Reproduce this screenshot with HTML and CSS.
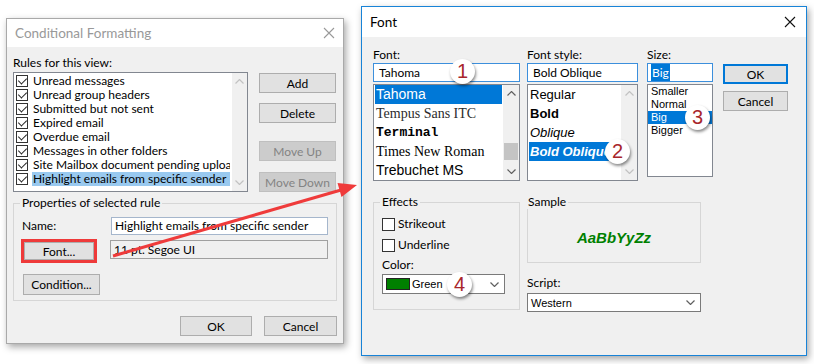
FILE: index.html
```html
<!DOCTYPE html>
<html lang="en">
  <head>
    <meta charset="UTF-8" />
    <meta name="viewport" content="width=device-width, initial-scale=1.0" />
    <title>Conditional Formatting - Font</title>
    <link rel="stylesheet" href="styles.css">
  </head>
  <body>
    <div class="screen">
      <!-- Conditional Formatting dialog -->
      <section class="dlg dlg-rules">
        <header class="titlebar inactive">
          <span class="title">Conditional Formatting</span>
          <svg class="close" width="12" height="12" viewBox="0 0 12 12"><path d="M1 1L11 11M11 1L1 11" /></svg>
        </header>
        <div class="dlg-body">
          <div class="lbl">Rules for this view:</div>
          <div class="rules-top">
            <div class="listbox rules-list">
              <ul class="items">
                <li><span class="chk"></span><span class="txt">Unread messages</span></li>
                <li><span class="chk"></span><span class="txt">Unread group headers</span></li>
                <li><span class="chk"></span><span class="txt">Submitted but not sent</span></li>
                <li><span class="chk"></span><span class="txt">Expired email</span></li>
                <li><span class="chk"></span><span class="txt">Overdue email</span></li>
                <li><span class="chk"></span><span class="txt">Messages in other folders</span></li>
                <li><span class="chk"></span><span class="txt">Site Mailbox document pending upload</span></li>
                <li><span class="chk"></span><span class="txt current">Highlight emails from specific sender</span></li>
              </ul>
              <div class="vscroll off narrow">
                <span class="sb-btn"><svg width="9" height="5" viewBox="0 0 9 5"><path d="M0.5 4.5L4.5 0.5L8.5 4.5" /></svg></span>
                <span class="sb-track"></span>
                <span class="sb-btn"><svg width="9" height="5" viewBox="0 0 9 5"><path d="M0.5 0.5L4.5 4.5L8.5 0.5" /></svg></span>
              </div>
            </div>
            <div class="side-btns">
              <button class="btn">Add</button>
              <button class="btn">Delete</button>
              <button class="btn up" disabled>Move Up</button>
              <button class="btn down" disabled>Move Down</button>
            </div>
          </div>
          <fieldset class="group props">
            <legend>Properties of selected rule</legend>
            <div class="prop-grid">
              <span class="lbl">Name:</span>
              <div class="field name-field">Highlight emails from specific sender</div>
              <button class="btn font-btn">Font...</button>
              <div class="field info-field">11 pt. Segoe UI</div>
              <button class="btn cond-btn">Condition...</button>
            </div>
          </fieldset>
          <div class="footer">
            <button class="btn ok">OK</button>
            <button class="btn cancel">Cancel</button>
          </div>
        </div>
      </section>

      <!-- Font dialog -->
      <section class="dlg dlg-font">
        <header class="titlebar">
          <span class="title">Font</span>
          <svg class="close" width="12" height="12" viewBox="0 0 12 12"><path d="M1 1L11 11M11 1L1 11" /></svg>
        </header>
        <div class="dlg-body">
          <div class="font-top">
            <div class="fcol fcol-font">
              <div class="lbl">Font:</div>
              <div class="field blue">Tahoma</div>
              <div class="listbox tall">
                <ul class="items font-items">
                  <li class="f-tahoma sel">Tahoma</li>
                  <li class="f-tempus">Tempus Sans ITC</li>
                  <li class="f-terminal">Terminal</li>
                  <li class="f-times">Times New Roman</li>
                  <li class="f-trebuchet">Trebuchet MS</li>
                </ul>
                <div class="vscroll">
                  <span class="sb-btn"><svg width="9" height="5" viewBox="0 0 9 5"><path d="M0.5 4.5L4.5 0.5L8.5 4.5" /></svg></span>
                  <span class="sb-track"><span class="sb-thumb"></span></span>
                  <span class="sb-btn"><svg width="9" height="5" viewBox="0 0 9 5"><path d="M0.5 0.5L4.5 4.5L8.5 0.5" /></svg></span>
                </div>
              </div>
            </div>
            <div class="fcol fcol-style">
              <div class="lbl">Font style:</div>
              <div class="field blue">Bold Oblique</div>
              <div class="listbox tall">
                <ul class="items style-items">
                  <li>Regular</li>
                  <li class="s-bold">Bold</li>
                  <li class="s-italic">Oblique</li>
                  <li class="s-bold s-italic sel">Bold Oblique</li>
                </ul>
                <div class="vscroll off">
                  <span class="sb-btn"><svg width="9" height="5" viewBox="0 0 9 5"><path d="M0.5 4.5L4.5 0.5L8.5 4.5" /></svg></span>
                  <span class="sb-track"></span>
                  <span class="sb-btn"><svg width="9" height="5" viewBox="0 0 9 5"><path d="M0.5 0.5L4.5 4.5L8.5 0.5" /></svg></span>
                </div>
              </div>
            </div>
            <div class="fcol fcol-size">
              <div class="lbl">Size:</div>
              <div class="field blue"><span class="picked">Big</span></div>
              <div class="listbox size-list">
                <ul class="items size-items">
                  <li>Smaller</li>
                  <li>Normal</li>
                  <li class="sel">Big</li>
                  <li>Bigger</li>
                </ul>
              </div>
            </div>
            <div class="fcol fcol-btns">
              <button class="btn default">OK</button>
              <button class="btn">Cancel</button>
            </div>
          </div>

          <div class="font-bottom">
            <fieldset class="group effects">
              <legend>Effects</legend>
              <div class="check-row"><span class="box"></span>Strikeout</div>
              <div class="check-row second"><span class="box"></span>Underline</div>
              <div class="lbl color-lbl">Color:</div>
              <div class="select color-select">
                <span class="swatch"></span>
                <span class="sel-text">Green</span>
                <svg class="caret" width="9" height="5" viewBox="0 0 9 5"><path d="M0.5 0.5L4.5 4.5L8.5 0.5" /></svg>
              </div>
            </fieldset>
            <div class="sample-col">
              <fieldset class="group sample">
                <legend>Sample</legend>
                <div class="sample-box"><span class="sample-text">AaBbYyZz</span></div>
              </fieldset>
              <div class="lbl script-lbl">Script:</div>
              <div class="select script-select">
                <span class="sel-text">Western</span>
                <svg class="caret" width="9" height="5" viewBox="0 0 9 5"><path d="M0.5 0.5L4.5 4.5L8.5 0.5" /></svg>
              </div>
            </div>
          </div>
        </div>
      </section>

      <!-- callouts -->
      <svg class="arrow" width="814" height="364" viewBox="0 0 814 364">
        <line x1="113" y1="256" x2="341" y2="190" />
        <polygon points="357,185 337.5,183 341.5,197" />
      </svg>
      <span class="badge b1">1</span>
      <span class="badge b2">2</span>
      <span class="badge b3">3</span>
      <span class="badge b4">4</span>
    </div>
  </body>
</html>
```

FILE: styles.css
```css
* {
  box-sizing: border-box;
}
body {
  margin: 0;
  background: #fff;
  font-family: Lato, "Liberation Sans", sans-serif;
  font-size: 12px;
  color: #000;
}
.screen {
  position: relative;
  display: flex;
  align-items: flex-start;
  gap: 17px;
  width: 814px;
  height: 364px;
  padding: 6px 0 0 6px;
}

/* dialogs */
.dlg {
  display: flex;
  flex-direction: column;
  background: #f0f0f0;
  box-shadow: 2px 3px 7px rgba(0, 0, 0, 0.35);
}
.dlg-rules {
  width: 338px;
  height: 326px;
  margin-top: 12px;
  border: 1px solid #a9a9a9;
}
.dlg-font {
  width: 446px;
  height: 350px;
  border: 1px solid #1883d7;
}
.titlebar {
  display: flex;
  align-items: center;
  justify-content: space-between;
  background: #fff;
  flex: none;
}
.dlg-rules .titlebar {
  height: 28px;
  padding: 0 8px 0 8px;
}
.dlg-font .titlebar {
  height: 30px;
  padding: 0 10px 0 8px;
}
.title {
  font-size: 13.5px;
}
.titlebar.inactive .title {
  color: #999;
}
.close path {
  stroke: #111;
  stroke-width: 1.1;
  fill: none;
}
.inactive .close path {
  stroke: #999;
}
.lbl {
  line-height: 14px;
  white-space: nowrap;
}

/* common controls */
.btn {
  font: inherit;
  color: #000;
  background: #e1e1e1;
  border: 1px solid #adadad;
  padding: 0;
  height: 20px;
}
.btn:disabled {
  background: #cccccc;
  border-color: #bfbfbf;
  color: #838383;
}
.btn.default {
  border: 2px solid #0078d7;
}
.field {
  height: 19px;
  line-height: 17px;
  padding-left: 5px;
  background: #fff;
  border: 1px solid #7a7a7a;
  white-space: nowrap;
  overflow: hidden;
}
.field.blue {
  border-color: #3c8fdc;
}
.listbox {
  display: flex;
  background: #fff;
  border: 1px solid #828790;
}
.items {
  list-style: none;
  margin: 0;
  padding: 0;
  flex: 1;
  min-width: 0;
}
.sel {
  background: #0078d7;
  color: #fff;
}
.vscroll {
  width: 16px;
  flex: none;
  display: flex;
  flex-direction: column;
  background: #f0f0f0;
}
.vscroll.narrow {
  width: 15px;
}
.sb-btn {
  height: 17px;
  flex: none;
  display: flex;
  align-items: center;
  justify-content: center;
}
.sb-track {
  flex: 1;
}
.sb-thumb {
  display: block;
  height: 17px;
  margin: 41px 1px 0;
  background: #c4c4c4;
}
.vscroll path,
.caret path {
  fill: none;
  stroke: #606060;
  stroke-width: 1.2;
}
.vscroll.off path {
  stroke: #c2c2c2;
}
.group {
  margin: 0;
  min-width: 0;
  border: 1px solid #d6d6d6;
  padding: 0 8px;
}
.group legend {
  padding: 0 2px;
  margin-left: -2px;
  line-height: 14px;
}

/* conditional formatting body */
.dlg-rules .dlg-body {
  padding: 9px 6px 0;
}
.rules-top {
  display: grid;
  grid-template-columns: 235px 77px;
  column-gap: 11px;
  margin-top: 2px;
}
.rules-list {
  height: 120px;
}
.rules-list .items {
  padding: 1px 0;
}
.rules-list li {
  display: flex;
  align-items: center;
  height: 14px;
  white-space: nowrap;
}
.chk {
  position: relative;
  flex: none;
  width: 12px;
  height: 12px;
  margin: 0 4px 0 2px;
  border: 1px solid #333;
  background: #fff;
}
.chk::after {
  content: "";
  position: absolute;
  left: 3px;
  top: 0;
  width: 4px;
  height: 7px;
  border-right: 1.5px solid #222;
  border-bottom: 1.5px solid #222;
  transform: rotate(45deg);
}
.txt {
  flex: 1;
  min-width: 0;
  margin-right: 2px;
  padding-left: 1px;
  line-height: 14px;
  overflow: hidden;
}
.txt.current {
  background: #99c9ef;
}
.side-btns {
  display: flex;
  flex-direction: column;
  padding-top: 1px;
}
.side-btns .btn + .btn {
  margin-top: 10px;
}
.side-btns .btn.up {
  margin-top: 18px;
}
.side-btns .btn.down {
  margin-top: 11px;
}
.props {
  margin-top: 4px;
  padding: 7px 8px 5px;
}
.prop-grid {
  display: grid;
  grid-template-columns: 88px 1fr;
  align-items: start;
}
.prop-grid .lbl {
  align-self: center;
}
.name-field {
  height: 18px;
  line-height: 16px;
  margin-left: 1px;
  padding-left: 3px;
  border-color: #a5b6cc;
}
.font-btn {
  width: 70px;
  height: 18px;
  margin: 7px 0 0 2px;
  outline: 3px solid #ee3a3a;
}
.info-field {
  margin-top: 5px;
  padding-left: 3px;
  background: #f0f0f0;
  border-color: #a0a0a0;
}
.cond-btn {
  width: 77px;
  height: 21px;
  margin: 14px 0 0 1px;
}
.footer {
  display: flex;
  justify-content: flex-end;
  gap: 12px;
  margin-top: 15px;
}
.footer .ok {
  width: 72px;
}
.footer .cancel {
  width: 73px;
}

/* font dialog body */
.dlg-font .dlg-body {
  padding: 11px 0 0 11px;
}
.font-top {
  display: flex;
  align-items: flex-start;
}
.fcol .field {
  margin-top: 1px;
}
.fcol .listbox {
  margin-top: 2px;
}
.fcol-font {
  width: 147px;
}
.fcol-style {
  width: 111px;
  margin-left: 7px;
}
.fcol-size {
  width: 66px;
  margin-left: 9px;
}
.fcol-size .field {
  padding-left: 3px;
}
.fcol-btns {
  width: 65px;
  margin-left: 10px;
  padding-top: 16px;
  display: flex;
  flex-direction: column;
  gap: 7px;
}
.tall {
  height: 97px;
}
.size-list {
  height: 93px;
}
.picked {
  background: #0078d7;
  color: #fff;
  padding: 1px 1px;
}
.font-items,
.style-items {
  padding: 0 1px;
}
.font-items li,
.style-items li {
  height: 19px;
  line-height: 19px;
  padding-left: 1px;
  white-space: nowrap;
  overflow: hidden;
}
.f-tahoma,
.f-trebuchet {
  font-family: "Liberation Sans", sans-serif;
  font-size: 14px;
}
.f-tempus {
  font-family: "Liberation Serif", serif;
  font-size: 14px;
  color: #2b2b2b;
}
.f-terminal {
  font-family: "Liberation Mono", monospace;
  font-weight: bold;
  font-size: 13px;
}
.f-times {
  font-family: "Liberation Serif", serif;
  font-size: 14px;
}
.style-items li {
  font-family: "Liberation Sans", sans-serif;
  font-size: 13px;
}
.s-bold {
  font-weight: bold;
}
.s-italic {
  font-style: italic;
}
.size-items li {
  height: 13px;
  line-height: 13px;
  padding-left: 3px;
  font-family: "Liberation Sans", sans-serif;
  font-size: 11px;
}

.font-bottom {
  display: flex;
  align-items: flex-start;
  margin-top: 14px;
}
.effects {
  width: 147px;
  padding: 8px 8px 15px;
}
.check-row {
  display: flex;
  align-items: center;
  height: 14px;
  line-height: 14px;
}
.check-row.second {
  margin-top: 7px;
}
.box {
  width: 13px;
  height: 13px;
  margin-right: 3px;
  background: #fff;
  border: 1px solid #333;
}
.color-lbl {
  margin-top: 6px;
}
.select {
  display: flex;
  align-items: center;
  background: #fff;
  border: 1px solid #7a7a7a;
  font-family: "Liberation Sans", sans-serif;
  font-size: 11px;
}
.color-select {
  width: 123px;
  height: 20px;
  margin-top: 2px;
}
.swatch {
  width: 24px;
  height: 12px;
  margin: 0 2px 0 3px;
  background: #008000;
  border: 1px solid #222;
}
.caret {
  margin: 0 5px 0 auto;
}
.sample-col {
  width: 174px;
  margin-left: 7px;
}
.sample {
  height: 68px;
  padding: 0;
}
.sample-box {
  height: 53px;
  padding-top: 3px;
  display: flex;
  align-items: center;
  justify-content: center;
}
.sample-text {
  font-family: "Liberation Sans", sans-serif;
  font-size: 15px;
  font-weight: bold;
  font-style: italic;
  color: #008000;
}
.script-lbl {
  margin-top: 13px;
}
.script-select {
  height: 19px;
  margin-top: 3px;
  padding-left: 3px;
}

/* callouts */
.arrow {
  position: absolute;
  left: 0;
  top: 0;
  pointer-events: none;
}
.arrow line {
  stroke: #ef3b3b;
  stroke-width: 3;
}
.arrow polygon {
  fill: #ef3b3b;
}
.badge {
  position: absolute;
  width: 25px;
  height: 25px;
  border-radius: 50%;
  background: #fff;
  box-shadow: 1px 2px 3px rgba(0, 0, 0, 0.45);
  display: flex;
  align-items: center;
  justify-content: center;
  font-family: "Liberation Sans", sans-serif;
  font-size: 20px;
  color: #a8262b;
}
.b1 {
  left: 450px;
  top: 59px;
}
.b2 {
  left: 605px;
  top: 139px;
}
.b3 {
  left: 685px;
  top: 105px;
}
.b4 {
  left: 447px;
  top: 272px;
}
```
